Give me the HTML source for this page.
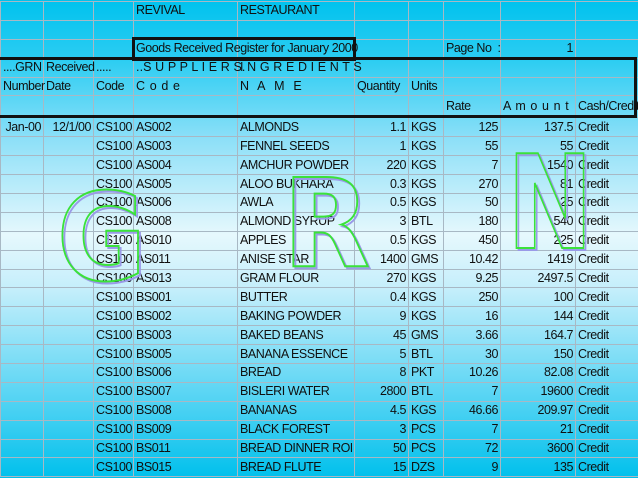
<!DOCTYPE html>
<html><head><meta charset="utf-8">
<style>
html,body{margin:0;padding:0;}
body{width:638px;height:478px;position:relative;overflow:hidden;
background:linear-gradient(to bottom,#00c2ee 0px,#2ccdf2 60px,#8ee0f8 140px,#e6f8fd 235px,#c4eefb 290px,#5ed6f4 390px,#00c0ec 478px);
font-family:"Liberation Sans",Arial,sans-serif;font-size:12.5px;color:#101010;}
table{position:absolute;left:0;top:1px;border-collapse:collapse;table-layout:fixed;width:639px;}
td{height:17.9px;padding:0 2px;border:1px solid #a8b8c4;white-space:nowrap;overflow:visible;letter-spacing:-0.45px;line-height:17px;}
td.r{text-align:right;}
td.s{letter-spacing:0.6px;}
td.s2{letter-spacing:0.1px;}
tr.t td{height:21px;}
.clip{display:block;overflow:hidden;}
.box{position:absolute;border:3px solid #111;box-sizing:border-box;}
svg{position:absolute;left:0;top:0;}
</style></head><body>
<table>
<colgroup><col style="width:43px"><col style="width:50px"><col style="width:40px"><col style="width:104px"><col style="width:117px"><col style="width:54px"><col style="width:35px"><col style="width:57px"><col style="width:75px"><col style="width:63px"></colgroup>
<tr><td></td><td></td><td></td><td>REVIVAL</td><td>RESTAURANT</td><td></td><td></td><td></td><td></td><td></td></tr>
<tr><td></td><td></td><td></td><td></td><td></td><td></td><td></td><td></td><td></td><td></td></tr>
<tr><td></td><td></td><td></td><td>Goods Received Register for January 2000</td><td></td><td></td><td></td><td>Page No&nbsp; :</td><td class="r">1</td><td></td></tr>
<tr><td>....GRN</td><td>Received</td><td>.....</td><td class="s2">..S U P P L I E R S.</td><td class="s2">I N G R E D I E N T S</td><td></td><td></td><td></td><td></td><td></td></tr>
<tr><td>Number</td><td>Date</td><td>Code</td><td class="s">C o d e</td><td class="s">N&nbsp; A&nbsp; M&nbsp; E</td><td>Quantity</td><td>Units</td><td></td><td></td><td></td></tr>
<tr class="t"><td></td><td></td><td></td><td></td><td></td><td></td><td></td><td>Rate</td><td class="s">A m o u n t</td><td>Cash/Credit</td></tr>
<tr><td class="r">Jan-00</td><td class="r">12/1/00</td><td>CS100</td><td>AS002</td><td>ALMONDS</td><td class="r">1.1</td><td>KGS</td><td class="r">125</td><td class="r">137.5</td><td>Credit</td></tr>
<tr><td></td><td></td><td>CS100</td><td>AS003</td><td>FENNEL SEEDS</td><td class="r">1</td><td>KGS</td><td class="r">55</td><td class="r">55</td><td>Credit</td></tr>
<tr><td></td><td></td><td>CS100</td><td>AS004</td><td>AMCHUR POWDER</td><td class="r">220</td><td>KGS</td><td class="r">7</td><td class="r">1540</td><td>Credit</td></tr>
<tr><td></td><td></td><td>CS100</td><td>AS005</td><td>ALOO BUKHARA</td><td class="r">0.3</td><td>KGS</td><td class="r">270</td><td class="r">81</td><td>Credit</td></tr>
<tr><td></td><td></td><td>CS100</td><td>AS006</td><td>AWLA</td><td class="r">0.5</td><td>KGS</td><td class="r">50</td><td class="r">25</td><td>Credit</td></tr>
<tr><td></td><td></td><td>CS100</td><td>AS008</td><td>ALMOND SYRUP</td><td class="r">3</td><td>BTL</td><td class="r">180</td><td class="r">540</td><td>Credit</td></tr>
<tr><td></td><td></td><td>CS100</td><td>AS010</td><td>APPLES</td><td class="r">0.5</td><td>KGS</td><td class="r">450</td><td class="r">225</td><td>Credit</td></tr>
<tr><td></td><td></td><td>CS100</td><td>AS011</td><td>ANISE STAR</td><td class="r">1400</td><td>GMS</td><td class="r">10.42</td><td class="r">1419</td><td>Credit</td></tr>
<tr><td></td><td></td><td>CS100</td><td>AS013</td><td>GRAM FLOUR</td><td class="r">270</td><td>KGS</td><td class="r">9.25</td><td class="r">2497.5</td><td>Credit</td></tr>
<tr><td></td><td></td><td>CS100</td><td>BS001</td><td>BUTTER</td><td class="r">0.4</td><td>KGS</td><td class="r">250</td><td class="r">100</td><td>Credit</td></tr>
<tr><td></td><td></td><td>CS100</td><td>BS002</td><td>BAKING POWDER</td><td class="r">9</td><td>KGS</td><td class="r">16</td><td class="r">144</td><td>Credit</td></tr>
<tr><td></td><td></td><td>CS100</td><td>BS003</td><td>BAKED BEANS</td><td class="r">45</td><td>GMS</td><td class="r">3.66</td><td class="r">164.7</td><td>Credit</td></tr>
<tr><td></td><td></td><td>CS100</td><td>BS005</td><td>BANANA ESSENCE</td><td class="r">5</td><td>BTL</td><td class="r">30</td><td class="r">150</td><td>Credit</td></tr>
<tr><td></td><td></td><td>CS100</td><td>BS006</td><td>BREAD</td><td class="r">8</td><td>PKT</td><td class="r">10.26</td><td class="r">82.08</td><td>Credit</td></tr>
<tr><td></td><td></td><td>CS100</td><td>BS007</td><td>BISLERI WATER</td><td class="r">2800</td><td>BTL</td><td class="r">7</td><td class="r">19600</td><td>Credit</td></tr>
<tr><td></td><td></td><td>CS100</td><td>BS008</td><td>BANANAS</td><td class="r">4.5</td><td>KGS</td><td class="r">46.66</td><td class="r">209.97</td><td>Credit</td></tr>
<tr><td></td><td></td><td>CS100</td><td>BS009</td><td>BLACK FOREST</td><td class="r">3</td><td>PCS</td><td class="r">7</td><td class="r">21</td><td>Credit</td></tr>
<tr><td></td><td></td><td>CS100</td><td>BS011</td><td><span class="clip">BREAD DINNER ROLL</span></td><td class="r">50</td><td>PCS</td><td class="r">72</td><td class="r">3600</td><td>Credit</td></tr>
<tr><td></td><td></td><td>CS100</td><td>BS015</td><td>BREAD FLUTE</td><td class="r">15</td><td>DZS</td><td class="r">9</td><td class="r">135</td><td>Credit</td></tr>
</table>
<div class="box" style="left:132px;top:37px;width:224px;height:24px;"></div>
<div class="box" style="left:0;top:57px;width:637px;height:61px;border-left:none;"></div>
<svg width="638" height="478" viewBox="0 0 638 478">
<g font-family="DejaVu Sans" font-weight="bold" fill="none" stroke-width="2">
<g stroke="#9a9ae8" transform="translate(2,2)">
<text x="57" y="280" font-size="121" textLength="89" lengthAdjust="spacingAndGlyphs">G</text>
<text x="283" y="266" font-size="122" textLength="87" lengthAdjust="spacingAndGlyphs">R</text>
<text x="507" y="248" font-size="130" textLength="86" lengthAdjust="spacingAndGlyphs">N</text>
</g>
<g stroke="#3ae23a">
<text x="57" y="280" font-size="121" textLength="89" lengthAdjust="spacingAndGlyphs">G</text>
<text x="283" y="266" font-size="122" textLength="87" lengthAdjust="spacingAndGlyphs">R</text>
<text x="507" y="248" font-size="130" textLength="86" lengthAdjust="spacingAndGlyphs">N</text>
</g>
</g>
</svg>
</body></html>
